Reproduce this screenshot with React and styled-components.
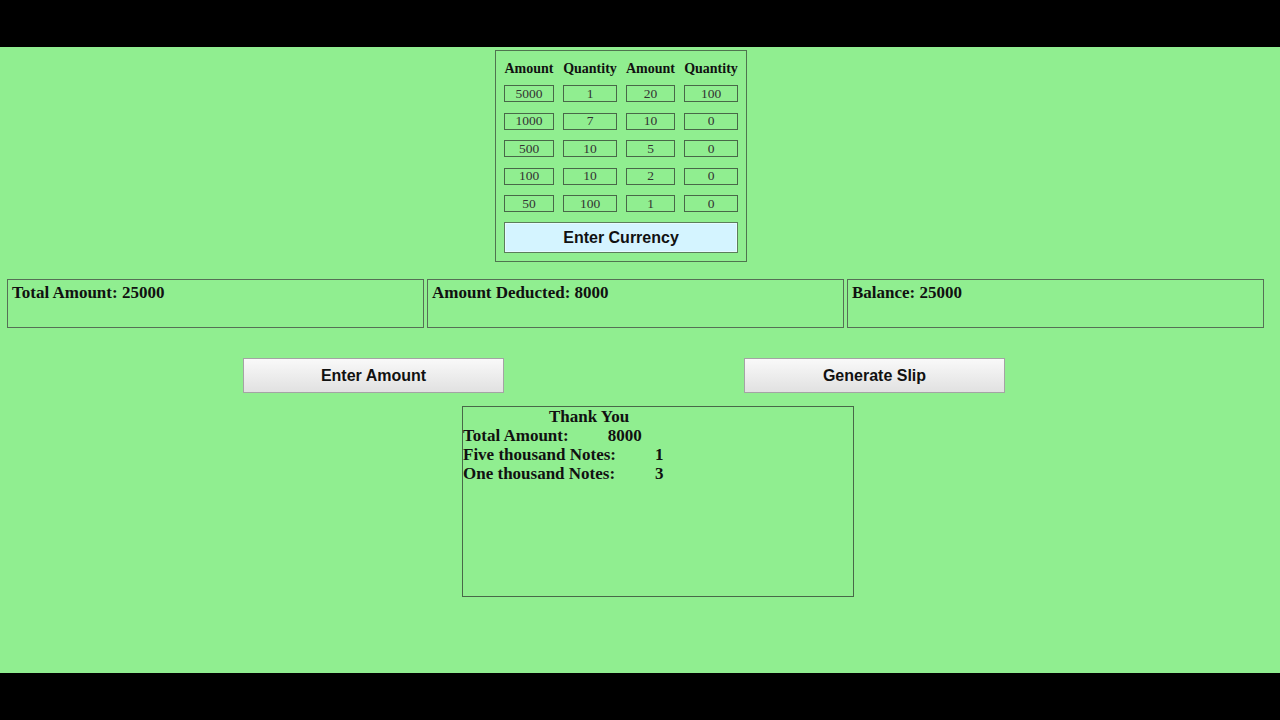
import React from 'react';
import styled, { createGlobalStyle } from 'styled-components';

const GlobalStyle = createGlobalStyle`
    html, body {
        margin: 0;
        padding: 0;
        background: #000;
    }
    body {
        font-family: "Liberation Serif", "Times New Roman", serif;
    }
`;

const Frame = styled.div`
    width: 1280px;
    height: 720px;
    padding: 47px 0;
    box-sizing: border-box;
    background: #000;
`;

const Screen = styled.div`
    height: 626px;
    background: #90ee90;
    display: flex;
    flex-direction: column;
    padding-top: 3px;
    box-sizing: border-box;
`;

const CurrencyBox = styled.div`
    width: 252px;
    margin-left: 495px;
    border: 1px solid #4f744f;
    box-sizing: border-box;
    padding: 8px;
`;

const Grid = styled.div`
    display: grid;
    grid-template-columns: 50px 54px 49px 54px;
    grid-template-rows: 15.5px;
    grid-auto-rows: 17px;
    column-gap: 9px;
    row-gap: 10.5px;
    margin-bottom: 10px;
`;

const Head = styled.div`
    font-weight: bold;
    font-size: 14px;
    text-align: center;
    color: #111;
    line-height: 20px;
    white-space: nowrap;
`;

const Cell = styled.input`
    width: 100%;
    height: 17px;
    box-sizing: border-box;
    border: 1px solid #486848;
    background: transparent;
    font-family: "Liberation Serif", "Times New Roman", serif;
    font-size: 13.5px;
    color: #333;
    text-align: center;
    padding: 0;
    outline: none;
`;

const CurrencyButton = styled.button`
    width: 100%;
    height: 31px;
    background: #d4f4ff;
    border: 1px solid #5b7d5b;
    box-shadow: inset 0 0 0 1px #e6faff;
    font-family: "Liberation Sans", Arial, sans-serif;
    font-weight: bold;
    font-size: 16px;
    color: #111;
    cursor: pointer;
`;

const InfoRow = styled.div`
    display: flex;
    gap: 3px;
    margin: 17px 0 0 7px;
`;

const InfoBox = styled.div`
    width: 417px;
    height: 49px;
    box-sizing: border-box;
    border: 1px solid #566f56;
    padding: 4px 4px;
    font-weight: bold;
    font-size: 17px;
    line-height: 18px;
    color: #111;
`;

const ButtonRow = styled.div`
    display: flex;
    margin: 30px 0 0 243px;
    gap: 240px;
`;

const ActionButton = styled.button`
    width: 261px;
    height: 35px;
    background: linear-gradient(#f9f9f9, #e1e1e1);
    border: 1px solid #a4a4a4;
    font-family: "Liberation Sans", Arial, sans-serif;
    font-weight: bold;
    font-size: 16px;
    color: #111;
    cursor: pointer;
`;

const Slip = styled.div`
    width: 392px;
    height: 191px;
    box-sizing: border-box;
    margin: 13px 0 0 462px;
    border: 1px solid #486848;
    font-weight: bold;
    font-size: 17px;
    line-height: 19px;
    color: #111;
`;

const SlipTitle = styled.div`
    padding-left: 86px;
`;

const SlipLine = styled.div`
    display: flex;
    white-space: nowrap;
`;

const SlipValue = styled.span`
    margin-left: ${(p) => p.gap}px;
`;

const rows = [
    ['5000', '1', '20', '100'],
    ['1000', '7', '10', '0'],
    ['500', '10', '5', '0'],
    ['100', '10', '2', '0'],
    ['50', '100', '1', '0'],
];

const App = () => {
    return (
        <Frame>
            <GlobalStyle />
            <Screen>
                <CurrencyBox>
                    <Grid>
                        <Head>Amount</Head>
                        <Head>Quantity</Head>
                        <Head>Amount</Head>
                        <Head>Quantity</Head>
                        {rows.map((r, i) =>
                            r.map((v, j) => <Cell key={i + '-' + j} defaultValue={v} />)
                        )}
                    </Grid>
                    <CurrencyButton>Enter Currency</CurrencyButton>
                </CurrencyBox>

                <InfoRow>
                    <InfoBox>Total Amount: 25000</InfoBox>
                    <InfoBox>Amount Deducted: 8000</InfoBox>
                    <InfoBox>Balance: 25000</InfoBox>
                </InfoRow>

                <ButtonRow>
                    <ActionButton>Enter Amount</ActionButton>
                    <ActionButton>Generate Slip</ActionButton>
                </ButtonRow>

                <Slip>
                    <SlipTitle>Thank You</SlipTitle>
                    <SlipLine>Total Amount:<SlipValue gap={39}>8000</SlipValue></SlipLine>
                    <SlipLine>Five thousand Notes:<SlipValue gap={39}>1</SlipValue></SlipLine>
                    <SlipLine>One thousand Notes:<SlipValue gap={40}>3</SlipValue></SlipLine>
                </Slip>
            </Screen>
        </Frame>
    );
};

export default App;
